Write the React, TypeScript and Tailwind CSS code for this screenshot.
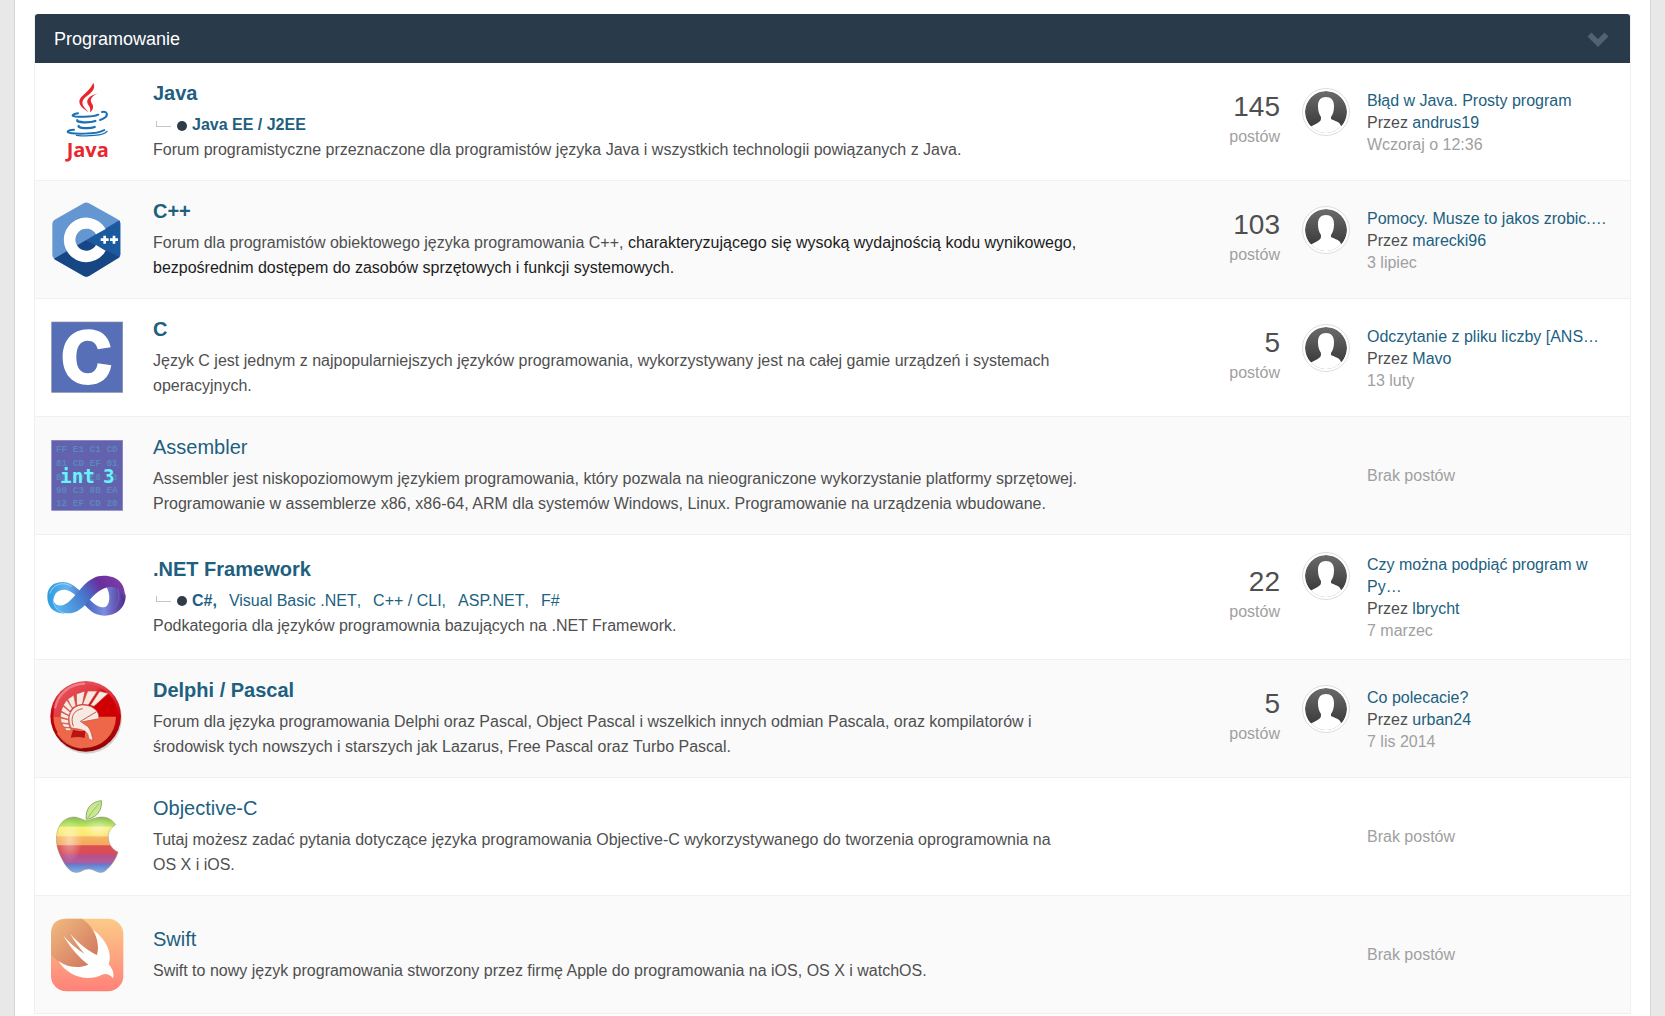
import type { ReactNode } from "react";

type Post = {
  title: string
  author: string
  date: string
}

type Forum = {
  name: string
  unread?: boolean
  icon: ReactNode
  children?: { name: string; unread?: boolean }[]
  description: ReactNode
  posts?: number
  last?: Post
}

const JavaIcon = () => (
  <svg viewBox="141 244 240 240" className="size-20" aria-hidden="true">
    <g fill="#e8262c">
      <path d="M280 246c8 18-4 28-18 39-17 13-19 23-7 38 3 4 7 8 11 11-13-6-29-19-28-33 1-16 31-27 42-55z" />
      <path d="M297 278c-15 4-27 14-24 25 2 6 8 10 6 18-1 6-5 11-9 14 2-11 0-15-5-22-11-16 7-31 32-35z" />
    </g>
    <g fill="none" stroke="#1b70b4" strokeWidth="6" strokeLinecap="round">
      <path d="M234 338c-12 2-17 5-16 7 6 5 60 5 77-3" />
      <path d="M306 334c15-3 18 7 11 15-4 4-10 7-17 9" />
      <path d="M232 359c-4 7 38 8 54 2" strokeWidth="7" />
      <path d="M236 376c-4 7 33 9 48 3" strokeWidth="7" />
      <path d="M222 387c-12 0-20 4-19 7 8 7 90 8 110-6" />
      <path d="M229 404c32 4 82 1 92-12" strokeWidth="4" />
    </g>
    <text x="200" y="469" fontSize="60" fontWeight="700" fontFamily="'Open Sans', sans-serif" fill="#e8262c">Java</text>
  </svg>
)

const CppIcon = () => (
  <svg viewBox="51 58 240 240" className="size-20" aria-hidden="true">
    <path d="M161 68q8-5 16 0l86 48q8 5 8 13v92q0 7-7 11l-87 54q-8 5-16 0l-87-50q-7-5-7-13v-94q0-8 7-12z" fill="#6496d2" />
    <path d="M169 178l99-59q3 4 3 10v92q0 7-4 9z" fill="#1c5a9f" />
    <path d="M169 178L72 234q2 2 5 4l84 48q8 5 16 0l87-53q3-2 5-4z" fill="#174684" />
    <path d="M227 145A67 67 0 1 0 227 210L198 193A33 33 0 1 1 198 161z" fill="#fff" />
    <path d="M224 165v24M212 177h24M252 165v24M240 177h24" stroke="#fff" strokeWidth="8" />
  </svg>
)

const CIcon = () => (
  <svg viewBox="51 412 240 240" className="size-20" aria-hidden="true">
    <rect x="65" y="424" width="213" height="211" fill="#566fb6" stroke="#8a8f9e" strokeWidth="2" />
    <path d="M242 500C236 465 210 446 175 446C126 446 98 480 98 530C98 580 127 613 174 613C211 613 238 593 244 554L203 548C200 568 190 578 174 578C150 578 139 560 139 530C139 499 150 480 173 480C189 480 200 489 203 506z" fill="#fff" />
  </svg>
)

const AsmIcon = () => (
  <svg viewBox="51 46 240 240" className="size-20" aria-hidden="true">
    <rect x="65" y="59" width="213" height="210" fill="#6362ae" stroke="#8583bd" strokeWidth="2" />
    <g fontFamily="'Liberation Mono', monospace" fontWeight="700" fontSize="28" fill="#5c87ba">
      <text x="78" y="94">FF E1 C1 CD</text>
      <text x="78" y="135">81 CD EF 01</text>
      <text x="78" y="177">B8 00 E8 C3</text>
      <text x="78" y="218">90 C3 8B EA</text>
      <text x="78" y="256">12 EF CD 20</text>
    </g>
    <g fontFamily="'DejaVu Sans Mono', monospace" fontWeight="700" fontSize="58" fill="#66f5fb">
      <text x="90" y="188">int</text>
      <text x="219" y="188">3</text>
    </g>
  </svg>
)

const NetIcon = () => (
  <svg viewBox="51 411 240 240" className="size-20" aria-hidden="true">
    <defs>
      <linearGradient id="net-loop" x1="52" x2="287" y1="0" y2="0" gradientUnits="userSpaceOnUse">
        <stop offset="0" stopColor="#2d9de0" />
        <stop offset="0.25" stopColor="#62b4ec" />
        <stop offset="0.5" stopColor="#4a62c0" />
        <stop offset="0.75" stopColor="#6a2c9c" />
        <stop offset="1" stopColor="#55308f" />
      </linearGradient>
      <linearGradient id="net-band" x1="90" x2="260" y1="580" y2="480" gradientUnits="userSpaceOnUse">
        <stop offset="0" stopColor="#58b6f0" />
        <stop offset="0.45" stopColor="#4677cb" />
        <stop offset="0.75" stopColor="#6a2e9e" />
        <stop offset="1" stopColor="#7a3aa5" />
      </linearGradient>
      <linearGradient id="net-low" x1="160" x2="285" y1="0" y2="0" gradientUnits="userSpaceOnUse">
        <stop offset="0" stopColor="#3c5fc0" />
        <stop offset="0.5" stopColor="#7a8de0" />
        <stop offset="1" stopColor="#4c2c8c" />
      </linearGradient>
    </defs>
    <path d="M52 530C52 500 72 485 100 486C123 487 139 503 154 516L142 530C126 516 112 508 99 509C80 511 71 524 70 544C71 562 86 576 105 581C72 580 52 562 52 530z" fill="url(#net-loop)" />
    <path d="M287 525C288 562 260 587 223 587C193 587 177 570 160 550L176 536C192 552 206 563 222 562C242 559 242 520 229 501C250 492 270 500 287 525z" fill="url(#net-low)" />
    <path d="M70 544C78 558 92 560 106 552C128 540 142 515 163 494C180 477 199 467 220 467C262 466 290 492 284 538C276 508 253 495 232 502C203 510 189 530 168 552C150 571 134 581 111 580C89 580 72 562 70 544z" fill="url(#net-band)" />
    <path d="M60 520C67 494 100 482 125 500" fill="none" stroke="#9bd6f5" strokeWidth="3" />
    <path d="M240 573C263 562 272 535 264 508" fill="none" stroke="#7c5fb8" strokeWidth="3" />
  </svg>
)

const DelphiIcon = () => (
  <svg viewBox="51 85 240 240" className="size-20" aria-hidden="true">
    <defs>
      <linearGradient id="delphi-rim" x1="0" x2="0" y1="0" y2="1">
        <stop offset="0" stopColor="#e5525c" />
        <stop offset="0.5" stopColor="#c8000a" />
        <stop offset="1" stopColor="#8c0508" />
      </linearGradient>
      <linearGradient id="delphi-face" x1="0" x2="1" y1="0" y2="0.6">
        <stop offset="0" stopColor="#ed5660" />
        <stop offset="0.55" stopColor="#e23a44" />
        <stop offset="0.7" stopColor="#d00005" />
        <stop offset="1" stopColor="#cf0003" />
      </linearGradient>
    </defs>
    <circle cx="170" cy="203" r="106" fill="#d8d0d0" />
    <circle cx="167" cy="197" r="106" fill="url(#delphi-rim)" />
    <path d="M70 198a97 97 0 0 1 194 0z" fill="url(#delphi-face)" />
    <path d="M70 198a94 94 0 0 0 188 0z" fill="#ed6748" />
    <path d="M75 173C82 130 119 100 165 99" fill="none" stroke="#f19aa0" strokeWidth="7" opacity="0.7" />
    <g fill="#f8e9e2" stroke="#c8493d" strokeWidth="2">
      <path d="M181 164l28-42 26 6-43 39z" />
      <path d="M158 161l15-40 29 0-27 42z" />
      <path d="M140 164l-1-34 26-9-8 40z" />
      <path d="M126 172l-13-26 18-13 7 33z" />
      <path d="M120 182l-20-19 10-15 17 25z" />
      <path d="M116 194l-23-13 6-15 22 19z" />
      <path d="M115 206l-24-7 2-15 24 12z" />
      <path d="M116 219l-23-3-1-14 24 6z" />
      <path d="M119 231l-18-2-6-11 22 3z" />
      <path d="M124 240l-15 0-6-9 18 1z" />
      <path d="M124 232C107 196 125 165 157 163C183 163 199 175 205 190L207 204L169 211L154 214L174 228C183 239 187 256 189 271L176 264C175 244 164 239 145 235z" />
    </g>
    <path d="M130 227C119 198 133 177 158 174M150 213l48-29" fill="none" stroke="#bb5d51" strokeWidth="3" />
    <path d="M129 237q20 7 37 3l-2 22q-19-5-42-1z" fill="#b91414" />
    <path d="M82 246c16 28 43 44 76 46" fill="none" stroke="#f59a70" strokeWidth="5" opacity="0.6" />
  </svg>
)

const AppleIcon = () => (
  <svg viewBox="51 49 240 240" className="size-20" aria-hidden="true">
    <defs>
      <linearGradient id="apple-bands" x1="0" x2="0" y1="108" y2="276" gradientUnits="userSpaceOnUse">
        <stop offset="0" stopColor="#87bb55" />
        <stop offset="0.17" stopColor="#bbe85c" />
        <stop offset="0.19" stopColor="#fbf07c" />
        <stop offset="0.34" stopColor="#fbe673" />
        <stop offset="0.36" stopColor="#f7b565" />
        <stop offset="0.5" stopColor="#f3a95f" />
        <stop offset="0.52" stopColor="#dc5052" />
        <stop offset="0.67" stopColor="#d84b5a" />
        <stop offset="0.69" stopColor="#b4508e" />
        <stop offset="0.82" stopColor="#b35c9d" />
        <stop offset="0.84" stopColor="#6974c5" />
        <stop offset="1" stopColor="#79b5ee" />
      </linearGradient>
      <radialGradient id="apple-shine">
        <stop offset="0" stopColor="#fff" stopOpacity="0.45" />
        <stop offset="1" stopColor="#fff" stopOpacity="0" />
      </radialGradient>
    </defs>
    <path d="M169 116C165 87 182 63 214 60C217 88 200 113 169 116z" fill="#c9e791" stroke="#8aaa63" strokeWidth="3" />
    <path d="M174 111C184 96 195 83 208 68" fill="none" stroke="#9cc36a" strokeWidth="3" />
    <path d="M170 120C187 117 196 109 216 109C235 109 248 119 257 132C240 143 234 156 235 171C236 190 246 206 264 214C257 238 240 261 222 273C204 281 193 265 176 265C159 265 151 278 134 275C115 271 103 249 94 231C82 208 76 183 81 157C86 128 106 110 130 109C147 109 155 117 170 120z" fill="url(#apple-bands)" stroke="#9a8f79" strokeOpacity="0.5" strokeWidth="3" />
    <ellipse cx="119" cy="178" rx="38" ry="68" fill="url(#apple-shine)" />
    <ellipse cx="205" cy="143" rx="43" ry="32" fill="url(#apple-shine)" />
  </svg>
)

const SwiftIcon = () => (
  <svg viewBox="51 402 240 240" className="size-20" aria-hidden="true">
    <defs>
      <linearGradient id="swift-bg" x1="0" x2="0" y1="0" y2="1">
        <stop offset="0" stopColor="#fbcb87" />
        <stop offset="1" stopColor="#ff8179" />
      </linearGradient>
      <linearGradient id="swift-shade" x1="0" x2="1" y1="0" y2="1">
        <stop offset="0" stopColor="#f3bc80" />
        <stop offset="1" stopColor="#cc705c" />
      </linearGradient>
    </defs>
    <rect x="63" y="413" width="217" height="218" rx="46" fill="url(#swift-bg)" />
    <path d="M63 520V459Q63 413 109 413H156C188 434 210 475 202 522L173 555C126 565 84 550 63 520z" fill="url(#swift-shade)" />
    <path d="M189 446C229 475 248 516 236 550C249 565 253 579 249 592C239 580 228 577 216 581C170 604 113 585 85 540C114 561 147 563 175 551C145 528 119 497 100 464C119 486 142 505 164 519C148 500 134 482 121 459C146 487 171 508 201 522C208 499 204 471 189 446z" fill="#fff" />
  </svg>
)

const forums: Forum[] = [
  {
    name: "Java",
    unread: true,
    icon: <JavaIcon />,
    children: [{ name: "Java EE / J2EE", unread: true }],
    description: "Forum programistyczne przeznaczone dla programistów języka Java i wszystkich technologii powiązanych z Java.",
    posts: 145,
    last: { title: "Błąd w Java. Prosty program", author: "andrus19", date: "Wczoraj o 12:36" },
  },
  {
    name: "C++",
    unread: true,
    icon: <CppIcon />,
    description: (
      <>
        Forum dla programistów obiektowego języka programowania C++,{" "}
        <span className="text-[#1c1c1c]">
          charakteryzującego się wysoką wydajnością kodu wynikowego, bezpośrednim dostępem do zasobów sprzętowych i funkcji systemowych.
        </span>
      </>
    ),
    posts: 103,
    last: { title: "Pomocy. Musze to jakos zrobic.…", author: "marecki96", date: "3 lipiec" },
  },
  {
    name: "C",
    unread: true,
    icon: <CIcon />,
    description: "Język C jest jednym z najpopularniejszych języków programowania, wykorzystywany jest na całej gamie urządzeń i systemach operacyjnych.",
    posts: 5,
    last: { title: "Odczytanie z pliku liczby [ANS…", author: "Mavo", date: "13 luty" },
  },
  {
    name: "Assembler",
    icon: <AsmIcon />,
    description: "Assembler jest niskopoziomowym językiem programowania, który pozwala na nieograniczone wykorzystanie platformy sprzętowej. Programowanie w assemblerze x86, x86-64, ARM dla systemów Windows, Linux. Programowanie na urządzenia wbudowane.",
  },
  {
    name: ".NET Framework",
    unread: true,
    icon: <NetIcon />,
    children: [
      { name: "C#", unread: true },
      { name: "Visual Basic .NET" },
      { name: "C++ / CLI" },
      { name: "ASP.NET" },
      { name: "F#" },
    ],
    description: "Podkategoria dla języków programownia bazujących na .NET Framework.",
    posts: 22,
    last: { title: "Czy można podpiąć program w Py…", author: "lbrycht", date: "7 marzec" },
  },
  {
    name: "Delphi / Pascal",
    unread: true,
    icon: <DelphiIcon />,
    description: "Forum dla języka programowania Delphi oraz Pascal, Object Pascal i wszelkich innych odmian Pascala, oraz kompilatorów i środowisk tych nowszych i starszych jak Lazarus, Free Pascal oraz Turbo Pascal.",
    posts: 5,
    last: { title: "Co polecacie?", author: "urban24", date: "7 lis 2014" },
  },
  {
    name: "Objective-C",
    icon: <AppleIcon />,
    description: (
      <>
        Tutaj możesz zadać pytania dotyczące języka programowania Objective-C wykorzystywanego do tworzenia oprogramownia na{" "}
        <span className="whitespace-nowrap">OS X i iOS.</span>
      </>
    ),
  },
  {
    name: "Swift",
    icon: <SwiftIcon />,
    description: "Swift to nowy język programowania stworzony przez firmę Apple do programowania na iOS, OS X i watchOS.",
  },
]

const Avatar = ({ author }: { author: string }) => (
  <a href="#" aria-label={author} className="size-12 shrink-0 rounded-full border border-[#dedede] bg-white p-[2px]">
    <svg viewBox="0 0 42 42" className="size-full rounded-full" aria-hidden="true">
      <defs>
        <linearGradient id="avatar-bg" x1="0" x2="0" y1="0" y2="1">
          <stop offset="0" stopColor="#6b6b6b" />
          <stop offset="1" stopColor="#333333" />
        </linearGradient>
      </defs>
      <circle cx="21" cy="21" r="21" fill="url(#avatar-bg)" />
      <path d="M21 6c5 0 8 3 8 9 0 5-1 8-3 11v2c4 2 8 3 9 5l2 4v6H5v-7c3-2 7-3 9-5 2-1 2-3 2-5-2-3-3-6-3-11 0-6 3-9 8-9z" fill="#fff" />
    </svg>
  </a>
)

const SubForums = ({ items }: { items: NonNullable<Forum["children"]> }) => (
  <ul className="flex flex-wrap items-center text-base leading-[25px] text-[#215f7f]">
    <li aria-hidden="true" className="mr-1.5 mb-0.5 ml-[3px] h-1.5 w-[15px] border-b border-l border-[#c4c4c4]"></li>
    {items.map((item, i) => (
      <li key={item.name} className={`flex items-center ${item.unread ? "font-bold" : ""} ${i < items.length - 1 ? "mr-3" : ""}`}>
        {item.unread && <span className="mt-0.5 mr-[5px] size-2.5 rounded-full bg-[#2f3b46]"></span>}
        <a href="#">{item.name}</a>
        {i < items.length - 1 && ","}
      </li>
    ))}
  </ul>
)

const ForumRow = ({ forum }: { forum: Forum }) => (
  <li className="flex min-h-[118px] items-center border-b border-[#f0f0f0] py-[17px] pr-[15px] pl-3 odd:bg-white even:bg-[#fafafa]">
    <div className="mr-[26px] shrink-0">{forum.icon}</div>
    <div className="min-w-0 flex-1">
      <h3 className={`mb-1.5 text-xl leading-[25px] text-[#215f7f] ${forum.unread ? "font-bold" : ""}`}>
        <a href="#">{forum.name}</a>
      </h3>
      {forum.children && <SubForums items={forum.children} />}
      <p className="text-base leading-[25px]">{forum.description}</p>
    </div>
    <dl className="flex w-[188px] shrink-0 flex-col-reverse pt-0.5 text-right">
      {forum.posts !== undefined && (
        <>
          <dt className="text-base leading-8 text-[#a0a0a0]">postów</dt>
          <dd className="text-[28px] leading-7">{forum.posts}</dd>
        </>
      )}
    </dl>
    <div className="ml-[22px] flex w-[313px] shrink-0 gap-[17px] text-base leading-[22px]">
      {forum.last ? (
        <>
          <Avatar author={forum.last.author} />
          <div className="min-w-0 flex-1 pt-0.5">
            <a href="#" className="block text-[#215f7f]">{forum.last.title}</a>
            <p>Przez <a href="#" className="text-[#215f7f]">{forum.last.author}</a></p>
            <p className="text-[#a0a0a0]">{forum.last.date}</p>
          </div>
        </>
      ) : (
        <p className="pl-[65px] text-[#a0a0a0]">Brak postów</p>
      )}
    </div>
  </li>
)

export default function App() {
  return (
    <div className="min-h-screen bg-[#e8e8e8] px-3.5 font-['Liberation_Sans',Arial,sans-serif] text-[#4f4f4f]">
      <main className="min-h-screen border-x border-[#d6d6d6] bg-white px-[19px] pt-3.5">
        <section className="border-x border-[#f0f0f0]">
          <header className="flex h-[49px] items-center justify-between rounded-t-[3px] bg-[#293a4a] pr-[21px] pl-[19px] text-white">
            <h2 className="text-lg">Programowanie</h2>
            <button type="button" aria-label="Zwiń" className="cursor-pointer">
              <svg viewBox="0 0 22 16" className="h-4 w-[22px]" aria-hidden="true">
                <path d="M2.5 3.5L11 12L19.5 3.5" fill="none" stroke="#54616e" strokeWidth="5.5" />
              </svg>
            </button>
          </header>
          <ul>
            {forums.map((forum) => (
              <ForumRow key={forum.name} forum={forum} />
            ))}
          </ul>
        </section>
      </main>
    </div>
  )
}
